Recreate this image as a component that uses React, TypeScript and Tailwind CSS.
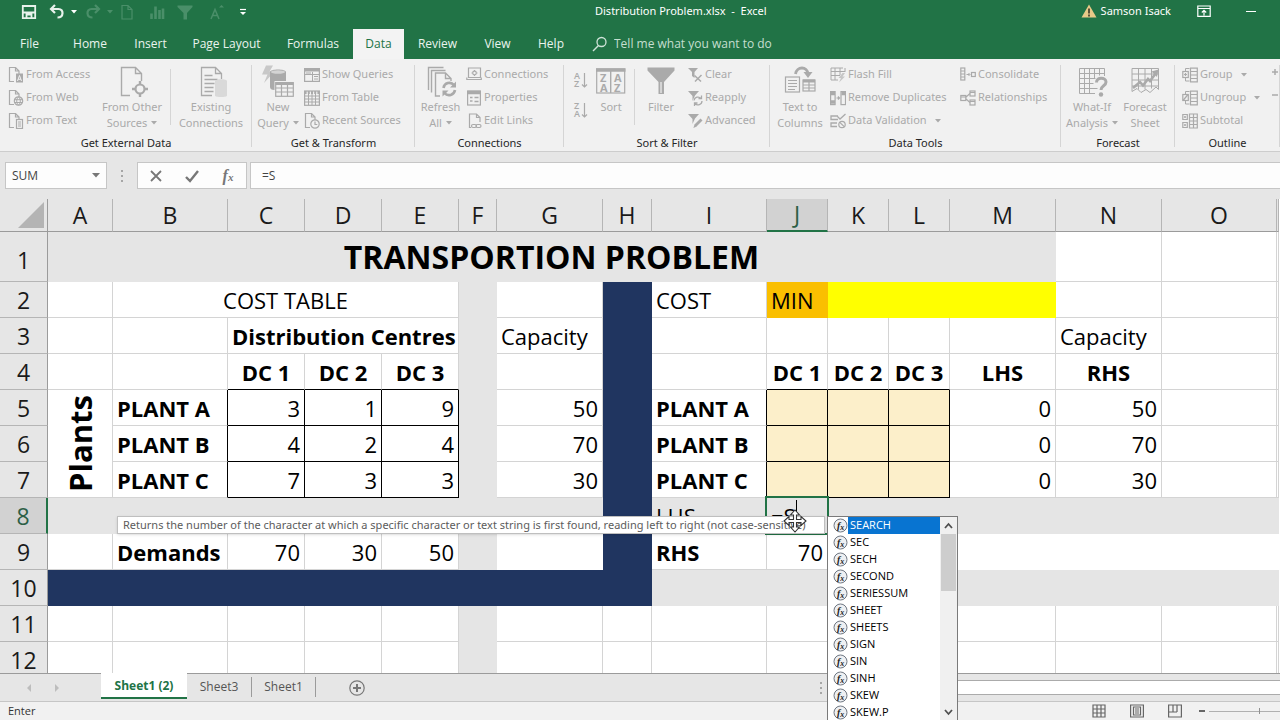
import { Fragment, type ReactNode } from "react";

/* ---------- icon helpers ---------- */

function Svg({ size = 16, w, children, className = "" }: { size?: number; w?: number; children: ReactNode; className?: string }) {
  return (
    <svg
      width={w ?? size}
      height={size}
      viewBox={`0 0 ${w ?? size} ${size}`}
      fill="none"
      stroke="currentColor"
      strokeWidth="1.2"
      aria-hidden="true"
      className={`shrink-0 ${className}`}
    >
      {children}
    </svg>
  );
}

const docSmall = <path d="M6 14.500H1.500v-14h6l3.500 3.500v3M7.500 .5v3.500H11" />;

const icons = {
  access: (
    <Svg>
      {docSmall}
      <rect x="8" y="6.500" width="7" height="9" fill="currentColor" stroke="none" />
      <path d="M9.500 14l2-5.500 2 5.500M10.200 12.300h2.600" stroke="#f1f1f1" strokeWidth="1" />
    </Svg>
  ),
  web: (
    <Svg>
      {docSmall}
      <circle cx="10.500" cy="11" r="4.200" fill="#f1f1f1" />
      <path d="M6.300 9.700h8.400M6.300 12.500h8.400M10.500 6.800c-2.400 2.500-2.400 6 0 8.400M10.500 6.800c2.400 2.500 2.400 6 0 8.400" strokeWidth="1" />
    </Svg>
  ),
  text: (
    <Svg>
      {docSmall}
      <rect x="8.500" y="6.500" width="6" height="9" fill="#f1f1f1" />
      <path d="M10 9h3M10 11h3M10 13h3" strokeWidth="1" />
    </Svg>
  ),
  showQueries: (
    <Svg>
      <rect x=".6" y="1.600" width="14.800" height="12.800" />
      <path d="M.6 3h14.800" strokeWidth="3" />
      <path d="M8.500 5v9M.6 7.500h15M10 9.500h4M10 12h4M2 6h5" strokeWidth="1" />
    </Svg>
  ),
  table: (
    <Svg>
      <rect x=".6" y="1" width="14.800" height="14.300" />
      <path d="M.6 2.500h14.800" strokeWidth="3" strokeDasharray="2 1.200" />
      <path d="M.6 6h15M.6 9h15M.6 12h15M4.500 4v11M8 4v11M11.500 4v11" strokeWidth="1" />
    </Svg>
  ),
  recent: (
    <Svg>
      {docSmall}
      <circle cx="11" cy="11" r="4.200" fill="#f1f1f1" />
      <path d="M11 8.500v3h2.300" />
    </Svg>
  ),
  connections: (
    <Svg>
      <path d="M2.500 1h12v9.500h-12zM.8 10.500v2h14.500v-2" />
      <circle cx="8.500" cy="6" r="1.800" />
      <path d="M8.500 3v1M8.500 8v1M5.500 6h1M10.500 6h1" />
    </Svg>
  ),
  properties: (
    <Svg>
      <rect x="1.600" y="1" width="12.800" height="14" />
      <path d="M1.600 2.500h12.800" strokeWidth="3.500" />
      <path d="M4 7.500h2.500M4 11h2.500M8.500 7.500h4M8.500 11.500h4" strokeWidth="1.500" />
    </Svg>
  ),
  editLinks: (
    <Svg>
      <path d="M5 14.500H3.500V1h7l3.500 3.500V9M10.500 1v3.500H14" />
      <rect x="5.500" y="11.500" width="5" height="3" rx="1.500" />
      <rect x="10" y="11.500" width="5" height="3" rx="1.500" />
    </Svg>
  ),
  clear: (
    <Svg>
      <path d="M1 1h10L7.500 5v6L5 9V5z" fill="currentColor" stroke="none" />
      <path d="M7.500 8.500l6.500 6M14.500 8L8 14.500" strokeWidth="1.500" />
    </Svg>
  ),
  reapply: (
    <Svg>
      <path d="M1 1h11L8 5.500 5.500 11V6z" fill="currentColor" stroke="none" />
      <path d="M7 10.500a4 4 0 0 1 7-2M15 11a4 4 0 0 1-7 2.500M14.500 5.500v3h-3M7.500 16v-3h3" strokeWidth="1.300" />
    </Svg>
  ),
  advanced: (
    <Svg>
      <path d="M1 1h11L8 5.500 5.500 11V6z" fill="currentColor" stroke="none" />
      <path d="M14.500 6.500l-6.500 6.500" strokeWidth="2.800" />
      <path d="M7.500 12l-1.200 3 3-1.200z" fill="currentColor" stroke="none" />
    </Svg>
  ),
  flashFill: (
    <Svg>
      <path d="M13 1H1v12h7M1 4.500h14M1 8.500h9M5 1v12M10 1v7M15 1v4" strokeWidth="1" />
      <path d="M12.500 6l-4 5h2.500l-2 4.500 6-6h-2.500L15 6z" fill="currentColor" stroke="none" opacity=".6" />
    </Svg>
  ),
  duplicates: (
    <Svg>
      <rect x=".6" y="1.600" width="4.500" height="13" />
      <rect x="11" y="1.600" width="4.500" height="13" />
      <path d="M1 3.500h4M1 12h4M11.500 3.500h4" strokeWidth="3.500" />
      <path d="M6.500 8h3M8 6.500L9.500 8 8 9.500" />
    </Svg>
  ),
  validation: (
    <Svg>
      <path d="M8 3H1v3.500h7M7 10H1v3.500h6M7.500 3.500L10 6l5.500-5" strokeWidth="1.300" />
      <circle cx="12" cy="11.500" r="3.200" />
      <path d="M9.800 9.300l4.400 4.400" />
    </Svg>
  ),
  consolidate: (
    <Svg>
      <rect x=".8" y="1" width="4" height="12" />
      <path d="M1 4h4M1 7h4M1 10h4M6.500 7.500h3M8.500 6L10 7.500 8.500 9" strokeWidth="1" />
      <rect x="11.500" y="5.500" width="3.800" height="4" />
    </Svg>
  ),
  relationships: (
    <Svg>
      <rect x=".8" y="5.500" width="5" height="5" />
      <rect x="10" y="1" width="5" height="5" />
      <rect x="10" y="10" width="5" height="5" />
      <path d="M6 7l4-3.500M6 9l4 3.500M1 7h5M10 2.500h5M10 11.500h5" strokeWidth="1.100" />
    </Svg>
  ),
  group: (
    <Svg>
      <path d="M3.500 4.500V1.500h4M3.500 11v3h4" strokeWidth="1" />
      <rect x=".8" y="4.500" width="5.500" height="6" />
      <path d="M2 7.500h3M3.500 6v3" />
      <path d="M8.500 1.200h6.800v13.600H8.500z M8.500 4.500h7M8.500 8h7M8.500 11.500h7" />
    </Svg>
  ),
  ungroup: (
    <Svg>
      <path d="M3.500 4.500V1.500h4M3.500 11v3h4" strokeWidth="1" />
      <rect x=".8" y="4.500" width="5.500" height="6" />
      <path d="M1 10.500l5-6" />
      <path d="M8.500 1.200h6.800v13.600H8.500z M8.500 4.500h7M8.500 8h7M8.500 11.500h7" />
    </Svg>
  ),
  subtotal: (
    <Svg>
      <path d="M.8 1.500h4.500v5H.8zM.8 9.500h4.500v5H.8zM2 4h2M2 12h2M3 3v2M3 11v2" />
      <path d="M7.500 1h7.800v14H7.500zM7.500 4.500h8M7.500 8h8M7.500 11.500h8M11.500 1v14" />
    </Svg>
  ),
  otherSources: (
    <Svg size={32}>
      <path d="M14 30.500H5.500v-28h14l6 6V16M19.500 2.500v6h6" strokeWidth="1.400" />
      <circle cx="24" cy="24" r="4.500" strokeWidth="2.200" />
      <path d="M24 16v4M24 28v4M16 24h4M28 24h4" strokeWidth="2.400" />
    </Svg>
  ),
  existing: (
    <Svg size={32}>
      <path d="M17 30.500H6.500v-28h14l6 6V14M20.500 2.500v6h6M9.500 10.500h8M9.500 14.500h13M9.500 18.500h10M9.500 22.500h9M9.500 26.500h9" strokeWidth="1.300" />
      <path d="M20 16c0-2.500 12-2.500 12 0v14.500c0 2-12 2-12 0z" fill="#d9d9d9" stroke="none" />
    </Svg>
  ),
  newQuery: (
    <Svg size={32}>
      <path d="M4 .5h7L7.500 6.500h5L2 18l3.500-8.500H0z" fill="#c8c8c8" stroke="none" />
      <path d="M8 7c0-3.500 16-3.500 16 0v9H12.500v9C9.500 25 8 24 8 22z" fill="currentColor" stroke="none" />
      <ellipse cx="16" cy="7" rx="7" ry="1.800" fill="#d4d4d4" stroke="none" />
      <rect x="13.700" y="17.700" width="17.600" height="13.600" fill="#f1f1f1" />
      <path d="M13.500 18.500h18" strokeWidth="3" />
      <path d="M13.500 23h18M13.500 27h18M19.500 18v13M25.500 18v13" />
    </Svg>
  ),
  refresh: (
    <Svg size={32}>
      <path d="M3.500 25V2.500h15M6.500 27.500v-22h14" strokeWidth="1.400" />
      <path d="M15 31H10.500V8h10l5.500 5.500V16M20.500 8v5.500H26" strokeWidth="1.400" />
      <path d="M18.500 23a6 6 0 0 1 10.500-3M30 25a6 6 0 0 1-10.500 3" strokeWidth="2.600" />
      <path d="M31 16.500v6h-6zM17.500 31.500v-6h6z" fill="currentColor" stroke="none" />
    </Svg>
  ),
  filter: (
    <Svg size={32}>
      <path d="M2.500 2.500h27v3L19 17v12h-5.500V17L2.500 5.500z" fill="currentColor" stroke="none" />
      <path d="M16 17v11" stroke="#f1f1f1" />
    </Svg>
  ),
  textToColumns: (
    <Svg size={32}>
      <rect x="1.500" y="12" width="14" height="15" fill="#f1f1f1" />
      <path d="M4 15.500h9M4 18.500h9M4 21.500h9M4 24.500h7" />
      <rect x="19" y="15" width="12" height="11" />
      <path d="M19 16h12" strokeWidth="3" />
      <path d="M19 20h12M19 23h12M25 15v11" />
      <path d="M11.500 9c1-8 12-8 12.500 0" strokeWidth="2.800" />
      <path d="M19.500 7h9L24 13z" fill="currentColor" stroke="none" />
    </Svg>
  ),
  whatIf: (
    <Svg size={32}>
      <path d="M19 28.500H3.500v-25h25V11M3.500 8.500h25M3.500 13.500h16M3.500 18.500h14M3.500 23.500h18M8.500 3.500v25M13.500 3.500v25M18.500 3.500v10M23.500 3.500v7" strokeWidth="1" />
      <path d="M20.500 17.500c0-6 9.500-5.500 9.500-.5 0 4-5 3.500-5 8" strokeWidth="3" />
      <circle cx="25" cy="29.500" r="2.200" fill="currentColor" stroke="none" />
    </Svg>
  ),
  forecast: (
    <Svg size={32}>
      <path d="M3 3.500h26.500v21L27 22l-6 5.500-4-3-5 3-4-4-5 3zM3 9h26M3 15h26M3 21h26M9.500 3.500v21M16 3.500v21M22.500 3.500v20" strokeWidth="1" />
      <path d="M4 23l7-6 3 3.500 5-6.500 2 2 6-8" strokeWidth="2.600" />
      <path d="M22.500 6.500l7-2-1.500 7.500z" fill="currentColor" stroke="none" />
    </Svg>
  ),
};

function SortIcon({ top, bottom }: { top: string; bottom: string }) {
  return (
    <Svg size={22} w={16}>
      <g fill="currentColor" stroke="none" fontSize="9" fontWeight="600" className="font-['Open_Sans',sans-serif]">
        <text x="2" y="10">{top}</text>
        <text x="2" y="18">{bottom}</text>
      </g>
      <path d="M12.500 4v14M10 15.500l2.500 2.500 2.500-2.500" />
    </Svg>
  );
}

const sortBig = (
  <Svg size={32}>
    <rect x="1.700" y="4" width="28" height="24" />
    <path d="M15.700 4v24" strokeWidth="1.400" />
    <path d="M1 5h29.500" strokeWidth="3.500" />
    <g fill="currentColor" stroke="none" fontSize="11" fontWeight="700" className="font-['Open_Sans',sans-serif]">
      <text x="5" y="16.500">Z</text>
      <text x="5" y="26.500">A</text>
      <text x="19" y="16.500">A</text>
      <text x="19" y="26.500">Z</text>
    </g>
  </Svg>
);

const Caret = ({ className = "" }: { className?: string }) => (
  <svg width="6" height="4" viewBox="0 0 6 4" fill="currentColor" aria-hidden="true" className={`shrink-0 ${className}`}>
    <path d="M0 0h6L3 3.500z" />
  </svg>
);

/* ---------- ribbon ---------- */

function Small({ icon, label, caret }: { icon: ReactNode; label: string; caret?: boolean }) {
  return (
    <button className="flex h-[23px] items-center gap-0.5 whitespace-nowrap">
      {icon}
      <span>{label}</span>
      {caret && <Caret className="ml-1.5" />}
    </button>
  );
}

function Big({ icon, lines, caret, width }: { icon: ReactNode; lines: string[]; caret?: boolean; width: string }) {
  return (
    <button className={`flex h-[72px] shrink-0 flex-col items-center whitespace-nowrap pt-0.5 leading-4 ${width}`}>
      {icon}
      {lines.map((line, i) => (
        <span key={line} className={`flex items-center gap-1 ${i === 0 ? "mt-0.5" : ""}`}>
          {line}
          {caret && i === lines.length - 1 && <Caret />}
        </span>
      ))}
    </button>
  );
}

function Group({ label, width, children }: { label: string; width: string; children: ReactNode }) {
  return (
    <section aria-label={label} className={`relative flex shrink-0 flex-col pt-1 ${width}`}>
      <div className="flex h-[72px]">{children}</div>
      <div className="text-center leading-4 text-[#262626]">{label}</div>
      <span className="absolute right-0 top-1.5 h-[82px] w-px bg-[#d5d5d5]" />
    </section>
  );
}

const Divider = () => <span className="mt-1.5 h-[56px] w-px shrink-0 bg-[#d5d5d5]" />;

function Ribbon() {
  return (
    <div className="flex h-[93px] shrink-0 overflow-hidden border-b border-[#cdcdcd] bg-[#f1f1f1] font-['Noto_Sans',sans-serif] text-[11px] text-[#aaaaaa]">
      <Group label="Get External Data" width="w-[252px]">
        <div className="w-[94px] shrink-0 pl-2">
          <Small icon={icons.access} label="From Access" />
          <Small icon={icons.web} label="From Web" />
          <Small icon={icons.text} label="From Text" />
        </div>
        <Big icon={icons.otherSources} lines={["From Other", "Sources"]} caret width="w-[76px]" />
        <Divider />
        <Big icon={icons.existing} lines={["Existing", "Connections"]} width="w-[80px]" />
      </Group>
      <Group label="Get & Transform" width="w-[163px]">
        <Big icon={icons.newQuery} lines={["New", "Query"]} caret width="w-[52px]" />
        <div>
          <Small icon={icons.showQueries} label="Show Queries" />
          <Small icon={icons.table} label="From Table" />
          <Small icon={icons.recent} label="Recent Sources" />
        </div>
      </Group>
      <Group label="Connections" width="w-[149px]">
        <Big icon={icons.refresh} lines={["Refresh", "All"]} caret width="w-[51px]" />
        <div>
          <Small icon={icons.connections} label="Connections" />
          <Small icon={icons.properties} label="Properties" />
          <Small icon={icons.editLinks} label="Edit Links" />
        </div>
      </Group>
      <Group label="Sort & Filter" width="w-[206px]">
        <div className="flex w-6 shrink-0 flex-col items-end gap-2 pt-1.5">
          <button aria-label="Sort A to Z" className="block">
            <SortIcon top="A" bottom="Z" />
          </button>
          <button aria-label="Sort Z to A" className="block">
            <SortIcon top="Z" bottom="A" />
          </button>
        </div>
        <Big icon={sortBig} lines={["Sort"]} width="w-[46px]" />
        <Divider />
        <Big icon={icons.filter} lines={["Filter"]} width="w-[52px]" />
        <div>
          <Small icon={icons.clear} label="Clear" />
          <Small icon={icons.reapply} label="Reapply" />
          <Small icon={icons.advanced} label="Advanced" />
        </div>
      </Group>
      <Group label="Data Tools" width="w-[291px]">
        <Big icon={icons.textToColumns} lines={["Text to", "Columns"]} width="w-[60px]" />
        <div className="w-[130px] shrink-0">
          <Small icon={icons.flashFill} label="Flash Fill" />
          <Small icon={icons.duplicates} label="Remove Duplicates" />
          <Small icon={icons.validation} label="Data Validation" caret />
        </div>
        <div>
          <Small icon={icons.consolidate} label="Consolidate" />
          <Small icon={icons.relationships} label="Relationships" />
        </div>
      </Group>
      <Group label="Forecast" width="w-[114px]">
        <Big icon={icons.whatIf} lines={["What-If", "Analysis"]} caret width="w-[62px]" />
        <Big icon={icons.forecast} lines={["Forecast", "Sheet"]} width="w-[44px]" />
      </Group>
      <Group label="Outline" width="w-[105px]">
        <div className="w-[96px] shrink-0 pl-[7px]">
          <Small icon={icons.group} label="Group" caret />
          <Small icon={icons.ungroup} label="Ungroup" caret />
          <Small icon={icons.subtotal} label="Subtotal" />
        </div>
        <div className="shrink-0">
          <button aria-label="Show Detail" className="flex h-[23px] items-center">
            <Svg><path d="M1 5h6M4 2v6M10 2h5M10 8h5M10 14h5" strokeWidth="1.500" /></Svg>
          </button>
          <button aria-label="Hide Detail" className="flex h-[23px] items-center">
            <Svg><path d="M1 5h6M10 2h5M10 8h5M10 14h5" strokeWidth="1.500" /></Svg>
          </button>
        </div>
      </Group>
    </div>
  );
}

/* ---------- title bar and tabs ---------- */

function TitleBar() {
  return (
    <header className="flex h-[29px] shrink-0 items-start bg-[#217346] font-['Noto_Sans',sans-serif] text-[11px] text-white">
      <div className="flex h-6 w-[595px] shrink-0 items-center pl-[21px]">
        <button aria-label="Save">
          <Svg className="text-[#e8f2ec]">
            <path d="M1.800 2h12.400v12.200H1.800zM2 8.500h12M5.500 14v-3.500h5V14" strokeWidth="1.800" />
          </Svg>
        </button>
        <button aria-label="Undo" className="ml-3 flex items-center gap-1.5">
          <Svg className="text-[#e8f2ec]">
            <path d="M2 5h7.500c5.500 0 5.500 8.500-1 8.500M6 1L2 5l4 4" strokeWidth="2.200" />
          </Svg>
          <Caret />
        </button>
        <button aria-label="Redo" className="ml-2 flex items-center gap-1.5 text-[#4a8f69]">
          <Svg>
            <path d="M14 5H6.500C1 5 1 13.500 7.500 13.500M10 1l4 4-4 4" strokeWidth="2.200" />
          </Svg>
          <Caret />
        </button>
        <button aria-label="New" className="ml-1.5 text-[#4a8f69]">
          <Svg><path d="M3 1.500h6l4 4v9.500H3zM9 1.500v4h4" /></Svg>
        </button>
        <button aria-label="Chart" className="ml-3.5 text-[#4a8f69]">
          <Svg><path d="M2.500 15V9.500M6.500 15V2.500M10.500 15V6M14 15V4.500" strokeWidth="2.600" /></Svg>
        </button>
        <button aria-label="Filter" className="ml-3 text-[#4a8f69]">
          <Svg><path d="M.5 1.500h15v1.500L10 9v6.500H6.500V9L.5 3z" fill="currentColor" stroke="none" /></Svg>
        </button>
        <button aria-label="Increase Font Size" className="ml-4 text-[#4a8f69]">
          <Svg>
            <path d="M2 15L6 5.500 10 15M3.500 11.500h5" strokeWidth="1.500" />
            <path d="M10 3.500h5L12.500 1z" fill="currentColor" stroke="none" />
          </Svg>
        </button>
        <button aria-label="Customize Quick Access Toolbar" className="ml-3.5">
          <Svg size={8}><path d="M1 1.500h6" /><path d="M1 4h6L4 7z" fill="currentColor" stroke="none" /></Svg>
        </button>
      </div>
      <h1 className="whitespace-pre leading-[22px]">Distribution Problem.xlsx  -  Excel</h1>
      <div className="flex h-[22px] flex-1 items-center justify-end pr-6">
        <svg width="16" height="14" viewBox="0 0 16 14" aria-hidden="true">
          <path d="M8 .5l7.500 13H.5z" fill="#e8c988" />
          <path d="M8 4.500v5M8 10.500v2" stroke="#4c4530" strokeWidth="1.800" />
        </svg>
        <span className="ml-1">Samson Isack</span>
        <button aria-label="Ribbon Display Options" className="ml-[26px]">
          <Svg size={14}>
            <path d="M.8 2h12.400v10.400H.8zM.8 4.500h12.400M7 11.500V6.500M4.800 8.500L7 6.300l2.200 2.200" />
          </Svg>
        </button>
        <button aria-label="Minimize" className="ml-[35px] h-px w-2.5 bg-white" />
      </div>
    </header>
  );
}

const tabs: [string, string][] = [
  ["File", "w-[59px]"],
  ["Home", "w-[62px]"],
  ["Insert", "w-[59px]"],
  ["Page Layout", "w-[93px]"],
  ["Formulas", "w-[80px]"],
  ["Data", "w-[51px]"],
  ["Review", "w-[67px]"],
  ["View", "w-[53px]"],
  ["Help", "w-[54px]"],
];

function TabBar() {
  return (
    <nav className="flex h-[30px] shrink-0 bg-[#217346] text-[12px] text-[#eaf3ee]">
      {tabs.map(([name, width]) => (
        <button
          key={name}
          className={`shrink-0 whitespace-nowrap ${width} ${name === "Data" ? "bg-[#f3f3f3] text-[#217346]" : ""}`}
        >
          {name}
        </button>
      ))}
      <label className="flex flex-1 items-center gap-1.5 pl-3.5">
        <Svg className="text-[#cfe3d8]">
          <circle cx="9.500" cy="6" r="4.500" strokeWidth="1.300" />
          <path d="M6.500 9.500L1 15" strokeWidth="1.500" />
        </Svg>
        <input
          aria-label="Tell me what you want to do"
          placeholder="Tell me what you want to do"
          className="w-full bg-transparent outline-none placeholder:text-[#c5dfd0]"
        />
      </label>
    </nav>
  );
}

/* ---------- formula bar ---------- */

function FormulaBar() {
  return (
    <div className="flex h-[47px] shrink-0 bg-[#e6e6e6] pt-[10px] text-[12px] text-[#444444]">
      <div className="ml-[5px] flex h-[27px] w-[102px] items-center border border-[#c6c6c6] bg-[#fdfdfd]">
        <input aria-label="Name Box" defaultValue="SUM" className="min-w-0 flex-1 bg-transparent pl-1.5 outline-none" />
        <button aria-label="Name Box list" className="px-1.5 text-[#777777]">
          <Svg size={5} w={8}><path d="M0 0h8L4 4.500z" fill="currentColor" stroke="none" /></Svg>
        </button>
      </div>
      <div className="flex h-[27px] w-[30px] items-center justify-center">
        <Svg size={12} w={2} className="text-[#a6a6a6]"><path d="M1 0v12" strokeWidth="2" strokeDasharray="2 3" /></Svg>
      </div>
      <div className="flex h-[27px] w-[110px] items-center justify-between border border-[#c6c6c6] bg-[#fdfdfd] px-2.5 text-[#777777]">
        <button aria-label="Cancel">
          <Svg><path d="M3 3l10 10M13 3L3 13" strokeWidth="1.800" /></Svg>
        </button>
        <button aria-label="Enter">
          <Svg><path d="M2 9l4 4 8-10" strokeWidth="2.400" /></Svg>
        </button>
        <button aria-label="Insert Function" className="w-4 font-['Liberation_Serif',serif] text-[16px] font-bold italic leading-none">
          f<span className="text-[11px]">x</span>
        </button>
      </div>
      <input
        aria-label="Formula Bar"
        defaultValue="=S"
        className="ml-[3px] h-[27px] min-w-0 flex-1 border border-r-0 border-[#c6c6c6] bg-[#fdfdfd] pl-[11px] outline-none"
      />
    </div>
  );
}

/* ---------- worksheet ---------- */

const columns: [string, string][] = [
  ["A", "w-[65px]"],
  ["B", "w-[115px]"],
  ["C", "w-[77px]"],
  ["D", "w-[77px]"],
  ["E", "w-[77px]"],
  ["F", "w-[38px]"],
  ["G", "w-[106px]"],
  ["H", "w-[49px]"],
  ["I", "w-[115px]"],
  ["J", "w-[61px]"],
  ["K", "w-[61px]"],
  ["L", "w-[61px]"],
  ["M", "w-[106px]"],
  ["N", "w-[106px]"],
  ["O", "w-[115px]"],
  ["", "w-auto"],
];

const GRID = "border-[#d4d4d4]";
const BLACK_R = "border-r-black border-b-[#d4d4d4]";
const BLACK_B = "border-r-[#d4d4d4] border-b-black";
const BLACK = "border-black";
const GREY = "bg-[#e5e5e5] border-[#e5e5e5]";
const BLUE = "bg-[#203560] border-[#203560]";
const CREAM = "bg-[#fcefca] border-black";

type CellProps = { children?: ReactNode; look?: string; text?: string; span?: number; rows?: number };

function Cell({ children, look = GRID, text = "", span, rows }: CellProps) {
  return (
    <td colSpan={span} rowSpan={rows} className={`whitespace-nowrap border-b border-r px-1 py-0 ${look} ${text}`}>
      {children}
    </td>
  );
}

const R = "text-right";
const B = "font-bold";
const BC = "font-bold text-center";

function Row({ n, children, tall }: { n: number; children: ReactNode; tall?: boolean }) {
  const active = n === 8;
  return (
    <tr className={tall ? "h-[50px]" : "h-9"}>
      <th
        scope="row"
        className={`border-b border-r px-0 pb-0 text-center text-[23px] font-normal ${tall ? "pt-2" : "pt-0.5"} ${
          active
            ? "border-b-[#b5b5b5] border-r-2 border-r-[#217346] bg-[#d2d2d2] text-[#2c5f46]"
            : "border-b-[#b5b5b5] border-r-[#9b9b9b] bg-[#e6e6e6] text-[#1a1a1a]"
        }`}
      >
        {n}
      </th>
      {children}
    </tr>
  );
}

const plants: [number, string, number[], number][] = [
  [5, "PLANT A", [3, 1, 9], 50],
  [6, "PLANT B", [4, 2, 4], 70],
  [7, "PLANT C", [7, 3, 3], 30],
];

const blank = (count: number, look?: string) => Array.from({ length: count }, (_, i) => <Cell key={i} look={look} />);

function Worksheet() {
  return (
    <main className="min-h-0 flex-1 overflow-hidden bg-white">
      <table className="w-full table-fixed border-separate border-spacing-0 text-[22px] leading-none text-black">
        <colgroup>
          <col className="w-[48px]" />
          {columns.map(([name, width]) => (
            <col key={name} className={width} />
          ))}
        </colgroup>
        <thead>
          <tr className="h-[33px]">
            <th className="border-b border-r border-b-[#9b9b9b] border-r-[#9b9b9b] bg-[#e6e6e6] p-0">
              <svg width="26" height="26" viewBox="0 0 26 26" aria-hidden="true" className="ml-auto mr-[3px]">
                <path d="M26 0v26H0z" fill="#b4b4b4" />
              </svg>
            </th>
            {columns.map(([name]) => (
              <th
                key={name}
                scope="col"
                className={`p-0 text-[23px] font-normal ${
                  name === "J"
                    ? "border-b-2 border-r border-b-[#217346] border-r-[#b5b5b5] bg-[#d2d2d2] text-[#2c5f46]"
                    : "border-b border-r border-b-[#9b9b9b] border-r-[#b5b5b5] bg-[#e6e6e6] text-[#1a1a1a]"
                }`}
              >
                {name}
              </th>
            ))}
          </tr>
        </thead>
        <tbody>
          <Row n={1} tall>
            <Cell span={13} look={GREY} text="text-center text-[32px] font-bold">TRANSPORTION PROBLEM</Cell>
            {blank(3)}
          </Row>
          <Row n={2}>
            <Cell />
            <Cell span={4} text="text-center">COST TABLE</Cell>
            <Cell look={GREY} />
            <Cell />
            <Cell look={BLUE} rows={8} />
            <Cell>COST</Cell>
            <Cell look="bg-[#fabf00] border-[#fabf00]">MIN</Cell>
            <Cell span={3} look="bg-[#ffff00] border-[#ffff00]" />
            {blank(3)}
          </Row>
          <Row n={3}>
            {blank(2)}
            <Cell span={3} text="font-bold">Distribution Centres</Cell>
            <Cell look={GREY} />
            <Cell>Capacity</Cell>
            {blank(5)}
            <Cell>Capacity</Cell>
            {blank(2)}
          </Row>
          <Row n={4}>
            {blank(2)}
            {["DC 1", "DC 2", "DC 3"].map((dc) => (
              <Cell key={dc} look={BLACK_B} text={BC}>{dc}</Cell>
            ))}
            <Cell look={GREY} />
            {blank(2)}
            {["DC 1", "DC 2", "DC 3"].map((dc) => (
              <Cell key={dc} look={BLACK_B} text={BC}>{dc}</Cell>
            ))}
            <Cell text={BC}>LHS</Cell>
            <Cell text={BC}>RHS</Cell>
            {blank(2)}
          </Row>
          {plants.map(([n, name, costs, capacity]) => (
            <Row key={n} n={n}>
              {n === 5 && (
                <Cell rows={3}>
                  <span className="ml-auto mr-auto block h-[96px] w-8 rotate-180 text-[31px] font-bold leading-8 [writing-mode:vertical-rl]">
                    Plants
                  </span>
                </Cell>
              )}
              <Cell look={BLACK_R} text={B}>{name}</Cell>
              {costs.map((cost, i) => (
                <Cell key={i} look={BLACK} text={R}>{cost}</Cell>
              ))}
              <Cell look={GREY} />
              <Cell text={R}>{capacity}</Cell>
              <Cell look={BLACK_R} text={B}>{name}</Cell>
              {blank(3, CREAM)}
              <Cell text={R}>0</Cell>
              <Cell text={R}>{capacity}</Cell>
              {blank(2)}
            </Row>
          ))}
          <Row n={8}>
            {blank(7, GREY)}
            <Cell look={GREY}>LHS</Cell>
            <Cell look={`relative ${GREY}`}>
              =S
              <span className="absolute -inset-x-0.5 -inset-y-0.5 border-2 border-[#217346]" />
              <span className="absolute left-[29px] top-0.5 h-8 w-px bg-black" />
            </Cell>
            {blank(6, GREY)}
          </Row>
          <Row n={9}>
            <Cell />
            <Cell text={B}>Demands</Cell>
            <Cell text={R}>70</Cell>
            <Cell text={R}>30</Cell>
            <Cell text={R}>50</Cell>
            <Cell look={GREY} />
            <Cell look="border-white" />
            <Cell text={B}>RHS</Cell>
            <Cell text={R}>70</Cell>
            {blank(2)}
            {blank(5, "border-white")}
          </Row>
          <Row n={10}>
            {blank(8, BLUE)}
            {blank(8, GREY)}
          </Row>
          {[11, 12].map((n) => (
            <Row key={n} n={n}>
              {blank(5)}
              <Cell look={GREY} />
              {blank(10)}
            </Row>
          ))}
        </tbody>
      </table>
    </main>
  );
}

/* ---------- sheet tabs and status bar ---------- */

function SheetTabs() {
  return (
    <div className="flex h-[29px] shrink-0 border-b border-t border-b-[#c6c6c6] border-t-[#9b9b9b] bg-[#e6e6e6] text-[12px] text-[#555555]">
      <div className="flex w-[101px] shrink-0 items-center pl-[27px] text-[#bdbdbd]">
        <button aria-label="Previous sheet"><Svg size={8} w={4}><path d="M4 0v8L0 4z" fill="currentColor" stroke="none" /></Svg></button>
        <button aria-label="Next sheet" className="ml-6"><Svg size={8} w={4}><path d="M0 0v8l4-4z" fill="currentColor" stroke="none" /></Svg></button>
      </div>
      <button className="-mt-px h-[26px] w-[86px] shrink-0 border-b-2 border-[#217346] bg-white pt-0.5 font-bold text-[#217346]">Sheet1 (2)</button>
      <button className="my-[3px] h-5 w-[65px] border-r border-[#9b9b9b]">Sheet3</button>
      <button className="my-[3px] h-5 w-[64px] border-r border-[#9b9b9b]">Sheet1</button>
      <button aria-label="New sheet" className="ml-[33px] text-[#777777]">
        <Svg><circle cx="8" cy="8" r="7.200" /><path d="M8 4v8M4 8h8" strokeWidth="2" /></Svg>
      </button>
      <div className="ml-auto flex items-center">
        <Svg size={12} w={2} className="text-[#a6a6a6]"><path d="M1 0v12" strokeWidth="2" strokeDasharray="2 3" /></Svg>
      </div>
      <div className="ml-2 mt-1.5 h-[15px] w-[450px] border-b border-t border-[#ababab] bg-white" />
    </div>
  );
}

function StatusBar() {
  return (
    <footer className="flex h-[18px] shrink-0 items-center bg-[#f1f1f1] pl-2 text-[11px] text-[#333333]">
      <span>Enter</span>
      <div className="ml-auto flex items-center text-[#666666]">
        <button aria-label="Normal view">
          <Svg size={14}><path d="M1 1h12v12H1zM1 5h12M1 9h12M5 1v12M9 1v12" /></Svg>
        </button>
        <button aria-label="Page Layout view" className="ml-6">
          <Svg size={14}><path d="M.6 1h12.800v12H.6zM3.500 3h7v8h-7zM5 5h4M5 7h4M5 9h4" /></Svg>
        </button>
        <button aria-label="Page Break Preview" className="ml-6">
          <Svg size={14}><path d="M.6 1h12.800v12H.6zM5 1v7M9 1v7M.6 8H9" /></Svg>
        </button>
        <button aria-label="Zoom out" className="ml-[17px] h-0.5 w-1.5 bg-[#666666]" />
        <input
          type="range"
          aria-label="Zoom"
          defaultValue={71}
          className="ml-1 h-px w-[71px] appearance-none bg-[#b0b0b0] [&::-webkit-slider-thumb]:h-1.5 [&::-webkit-slider-thumb]:w-px [&::-webkit-slider-thumb]:appearance-none [&::-webkit-slider-thumb]:bg-[#909090]"
        />
      </div>
    </footer>
  );
}

/* ---------- formula autocomplete ---------- */

const functionNames = ["SEARCH", "SEC", "SECH", "SECOND", "SERIESSUM", "SHEET", "SHEETS", "SIGN", "SIN", "SINH", "SKEW", "SKEW.P"];

function Autocomplete() {
  return (
    <Fragment>
      <div className="absolute left-[117px] top-[516px] flex h-[18px] w-[708px] items-center whitespace-nowrap border border-[#bfbfbf] bg-white pl-[5px] font-['Noto_Sans',sans-serif] text-[11px] text-[#5c5c5c] shadow-sm">
        Returns the number of the character at which a specific character or text string is first found, reading left to right (not case-sensitive)
      </div>
      <div className="absolute left-[827px] top-[516px] flex h-[210px] w-[131px] border border-[#7a7a7a] bg-white text-[11px] text-black">
        <ul role="listbox" aria-label="Functions" className="flex-1">
          {functionNames.map((name, i) => (
            <li key={name} role="option" aria-selected={i === 0} className="flex h-[17px] items-center pl-[5px]">
              <svg width="15" height="15" viewBox="0 0 15 15" aria-hidden="true" className="shrink-0">
                <circle cx="7.500" cy="7.500" r="6.500" fill="#eef0f3" stroke="#6f7782" />
                <text x="4" y="10.500" fontSize="10" fontWeight="700" fontStyle="italic" fill="#222222" className="font-['Liberation_Serif',serif]">
                  f<tspan fontSize="8" dy="1">x</tspan>
                </text>
              </svg>
              <span className={`flex h-full flex-1 items-center pl-0.5 ${i === 0 ? "bg-[#0874d1] text-white" : ""}`}>{name}</span>
            </li>
          ))}
        </ul>
        <div className="flex h-[203px] w-[17px] flex-col items-center bg-[#f0f0f0] text-[#505050]">
          <Svg size={17} w={9}><path d="M1 11l3.500-4 3.500 4" strokeWidth="1.800" /></Svg>
          <span className="h-[57px] w-[15px] bg-[#cdcdcd]" />
          <Svg size={17} w={9} className="mt-auto"><path d="M1 7l3.500 4L8 7" strokeWidth="1.800" /></Svg>
        </div>
      </div>
      <svg width="24" height="24" viewBox="0 0 24 24" aria-hidden="true" className="absolute left-[783px] top-[509px]">
        <path
          d="M12 1l4.500 5h-3v4.500H18v-3l5 4.500-5 4.500v-3h-4.500V18h3L12 23l-4.500-5h3v-4.500H6v3L1 12l5-4.500v3h4.500V6h-3z"
          fill="white"
          stroke="#333333"
          strokeWidth="1.100"
        />
      </svg>
    </Fragment>
  );
}

export default function App() {
  return (
    <div className="relative flex h-screen flex-col overflow-hidden bg-[#e6e6e6] font-['Open_Sans',sans-serif]">
      <TitleBar />
      <TabBar />
      <Ribbon />
      <FormulaBar />
      <Worksheet />
      <SheetTabs />
      <StatusBar />
      <Autocomplete />
    </div>
  );
}
